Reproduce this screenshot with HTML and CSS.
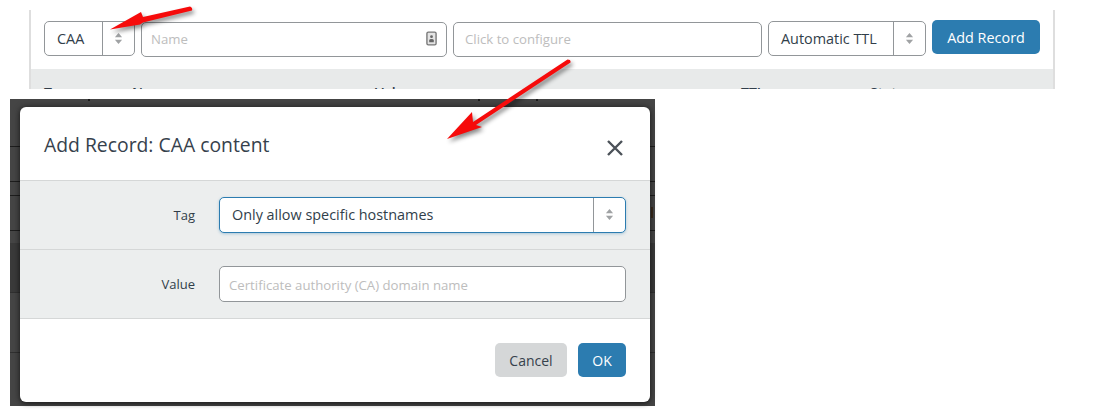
FILE: index.html
```html
<!DOCTYPE html>
<html lang="en">
<head>
<meta charset="utf-8">
<title>Add Record: CAA content</title>
<link rel="stylesheet" href="styles.css">
</head>
<body>
<section class="panel">
  <div class="toolbar">
    <div class="select select-type"><span class="select-value">CAA</span><span class="stepper"><svg class="updown" viewBox="0 0 10 14"><path d="M5 1 9 5.500H1zM5 13 1 8.500H9z"/></svg></span></div>
    <div class="input input-name"><span class="placeholder">Name</span>
      <svg class="contact" viewBox="0 0 12 16"><rect x="1" y="1" width="10" height="14" rx="1.500" fill="#e4e4e4" stroke="#777" stroke-width="1.500"/><circle cx="6" cy="6" r="1.500" fill="#666"/><path d="M3.500 12V10q0-1.500 2.500-1.500T8.500 10v2z" fill="#666"/></svg>
    </div>
    <div class="input input-content"><span class="placeholder">Click to configure</span></div>
    <div class="select select-ttl"><span class="select-value">Automatic TTL</span><span class="stepper"><svg class="updown" viewBox="0 0 10 14"><path d="M5 1 9 5.500H1zM5 13 1 8.500H9z"/></svg></span></div>
    <button class="btn btn-primary btn-add">Add Record</button>
  </div>
  <div class="table-head">
    <span class="col col-type">Type</span>
    <span class="col col-name">Name</span>
    <span class="col col-value">Value</span>
    <span class="col col-ttl">TTL</span>
    <span class="col col-status">Status</span>
  </div>
</section>

<div class="backdrop">
  <div class="modal">
    <header class="modal-head">
      <h2 class="modal-title">Add Record: CAA content</h2>
      <svg class="close" viewBox="0 0 16 16"><path d="M1 1 15 15M15 1 1 15"/></svg>
    </header>
    <div class="modal-body">
      <div class="field">
        <label class="field-label">Tag</label>
        <div class="select select-tag"><span class="select-value">Only allow specific hostnames</span><span class="stepper"><svg class="updown" viewBox="0 0 10 14"><path d="M5 1 9 5.500H1zM5 13 1 8.500H9z"/></svg></span></div>
      </div>
      <div class="field">
        <label class="field-label">Value</label>
        <div class="input input-value"><span class="placeholder">Certificate authority (CA) domain name</span></div>
      </div>
    </div>
    <footer class="modal-foot">
      <button class="btn btn-cancel">Cancel</button>
      <button class="btn btn-primary btn-ok">OK</button>
    </footer>
  </div>
</div>

<svg class="arrows" viewBox="0 0 1103 416" width="1103" height="416">
  <path d="M110 29.500 141 12 143 17 190 6.500Q193 8 192 10.500L143 22.500 140 24.500Z"/>
  <path d="M447 139 472 112 473 122 567.500 59.500Q571 59.500 570.500 62.500L476 125 482 127Z"/>
</svg>
</body>
</html>
```
FILE: styles.css
```css
* { box-sizing: border-box; }
html, body { margin: 0; background: #fff; }
body {
  position: relative;
  width: 1103px;
  height: 416px;
  overflow: hidden;
  font-family: "Open Sans", "Liberation Sans", sans-serif;
  font-size: 14px;
  color: #313e4a;
}

.panel {
  width: 1026px;
  height: 79px;
  margin: 10px 0 0 29px;
  border-left: 2px solid #dedede;
  border-right: 2px solid #dedede;
  overflow: hidden;
}
.toolbar {
  display: flex;
  align-items: flex-start;
  gap: 6px;
  height: 59px;
  padding: 10px 0 0 13px;
}
.select, .input {
  display: flex;
  align-items: center;
  height: 35px;
  background: #fff;
  border: 1px solid #929699;
  border-radius: 5px;
}
.select { margin-top: 1px; }
.input { margin-top: 2px; }
.select-value { flex: 1; padding-left: 12px; font-size: 14.4px; white-space: nowrap; }
.stepper {
  display: flex;
  align-items: center;
  justify-content: center;
  width: 32px;
  height: 100%;
  padding-right: 1px;
  border-left: 1px solid #929699;
}
.updown { width: 9px; height: 13px; fill: #a0a2a4; }
.select-type { width: 91px; }
.select-ttl { width: 158px; }
.input-name { width: 306px; padding: 0 10px 2px 9px; justify-content: space-between; }
.input-content { width: 309px; padding: 0 11px 2px; }
.placeholder { font-size: 13.2px; color: #bdbdbd; white-space: nowrap; }
.contact { width: 11px; height: 15px; margin-right: -1px; }

.btn {
  height: 34px;
  padding: 0;
  border: 0;
  border-radius: 5px;
  font: inherit;
  cursor: pointer;
}
.btn-primary { background: #2c7cb0; color: #fff; }
.btn-add { width: 108px; font-size: 14.4px; }

.table-head {
  display: flex;
  align-items: flex-start;
  height: 20px;
  background: #e8eaea;
  padding: 14px 0 0 13px;
  font-weight: 600;
  overflow: hidden;
}
.col { display: block; line-height: 19px; }
.col-type { width: 88px; }
.col-name { width: 243px; }
.col-value { width: 366px; }
.col-ttl { width: 129px; }

.backdrop {
  width: 645px;
  height: 307px;
  margin: 10px 0 0 10px;
  padding: 8px 5px 4px 10px;
  background-color: #454545;
  background-image:
    linear-gradient(#1e1e1e, #1e1e1e),
    linear-gradient(#1e1e1e, #1e1e1e),
    linear-gradient(#1e1e1e, #1e1e1e),
    linear-gradient(#1e1e1e, #1e1e1e),
    linear-gradient(#303030, #303030),
    linear-gradient(#303030, #303030),
    linear-gradient(#3a3a3a, #3a3a3a),
    linear-gradient(#1c1c1c, #1c1c1c),
    linear-gradient(#1c1c1c, #1c1c1c),
    linear-gradient(#1c1c1c, #1c1c1c),
    linear-gradient(#3a2a1c, #3a2a1c);
  background-repeat: no-repeat;
  background-size:
    100% 1px, 100% 1px, 100% 1px, 100% 1px,
    100% 1px, 100% 1px, 100% 49px,
    2px 2px, 2px 2px, 2px 2px, 2px 11px;
  background-position:
    0 47px, 0 82px, 0 96px, 0 131px,
    0 193px, 0 253px, 0 144px,
    78px 0, 468px 0, 526px 0, 641px 108px;
}
.modal {
  display: flex;
  flex-direction: column;
  height: 295px;
  background: #fff;
  border-radius: 6px;
  box-shadow: 0 0 7px rgba(0, 0, 0, .45), 0 2px 4px rgba(0, 0, 0, .35);
  overflow: hidden;
}
.modal-head {
  display: flex;
  align-items: center;
  justify-content: space-between;
  height: 74px;
  padding: 3px 27px 0 24px;
  border-bottom: 1px solid #d5d7d7;
}
.modal-title { margin: 0 0 1px; font-size: 19.350px; font-weight: 400; color: #36414c; }
.close { width: 16px; height: 16px; margin-top: 6px; stroke: #4c5259; stroke-width: 2.400; fill: none; }
.modal-body { background: #eceeee; }
.field {
  display: flex;
  align-items: center;
  height: 69px;
  padding: 0 24px 0 0;
  border-bottom: 1px solid #d5d7d7;
}
.field-label { width: 175px; text-align: right; margin-right: 24px; font-size: 13px; }
.select-tag {
  width: 407px;
  height: 36px;
  margin-top: -1px;
  border-color: #2c7cb0;
  box-shadow: 0 1px 3px rgba(44, 124, 176, .35);
}
.input-value { width: 407px; height: 36px; margin-top: 0; padding: 2px 9px 0; }
.modal-foot {
  flex: 1;
  display: flex;
  justify-content: flex-end;
  gap: 11px;
  padding: 24px 24px 0 0;
}
.btn-cancel { width: 72px; background: #d5d7d8; color: #36414c; }
.btn-ok { width: 48px; }

.arrows {
  position: absolute;
  left: 0;
  top: 0;
  fill: #f60b0b;
  filter: drop-shadow(2px 3px 2px rgba(0, 0, 0, .45));
  pointer-events: none;
}
```
